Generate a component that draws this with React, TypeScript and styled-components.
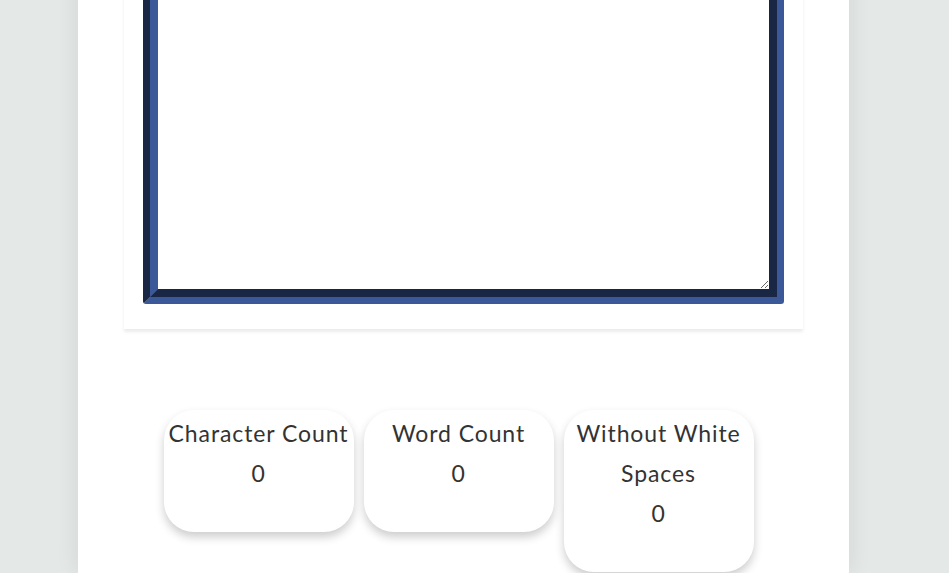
import React from 'react';
import styled, { createGlobalStyle } from 'styled-components';

const pageBg = '#e4e9e7';
const textDark = '#333333';
const frameBlue = '#3b5998';

const GlobalStyle = createGlobalStyle`
  html, body {
    margin: 0;
    padding: 0;
    background: ${pageBg};
  }
`;

const Screen = styled.div`
  background: ${pageBg};
  display: flex;
  flex-direction: column;
  height: 573px;
  justify-content: flex-end;
  overflow: hidden;
`;

const Sheet = styled.main`
  background: #ffffff;
  box-shadow: 0 0 22px rgba(0, 0, 0, 0.09);
  display: flex;
  flex-direction: column;
  flex-shrink: 0;
  margin-left: 78px;
  padding-bottom: 1px;
  width: 771px;
`;

const EditorBox = styled.section`
  box-shadow: 0 3px 3px rgba(0, 0, 0, 0.08);
  margin: 0 46px;
  padding: 0 19px 25px;
`;

const Editor = styled.textarea`
  border: 15px groove ${frameBlue};
  border-radius: 3px;
  box-sizing: border-box;
  display: block;
  font-family: "Lato", sans-serif;
  font-size: 18px;
  height: 420px;
  outline: none;
  padding: 8px;
  width: 100%;
`;

const CardRow = styled.div`
  align-items: flex-start;
  display: flex;
  gap: 10px;
  justify-content: center;
  margin-top: 81px;
  padding-right: 10px;
`;

const Card = styled.div`
  background: #ffffff;
  border-radius: 30px;
  box-shadow: 0 5px 10px rgba(0, 0, 0, 0.2);
  box-sizing: border-box;
  color: ${textDark};
  font-family: "Lato", sans-serif;
  font-size: 23px;
  letter-spacing: 0.9px;
  line-height: 40px;
  padding: 3px 0 39px;
  text-align: center;
  width: 190px;
`;

const Label = styled.div``;

const Value = styled.div``;

const stats = [
  { label: 'Character Count', value: 0 },
  { label: 'Word Count', value: 0 },
  { label: 'Without White Spaces', value: 0 },
];

export default function App() {
  return (
    <Screen>
      <GlobalStyle />
      <Sheet>
        <EditorBox>
          <Editor />
        </EditorBox>
        <CardRow>
          {stats.map((s) => (
            <Card key={s.label}>
              <Label>{s.label}</Label>
              <Value>{s.value}</Value>
            </Card>
          ))}
        </CardRow>
      </Sheet>
    </Screen>
  );
}
